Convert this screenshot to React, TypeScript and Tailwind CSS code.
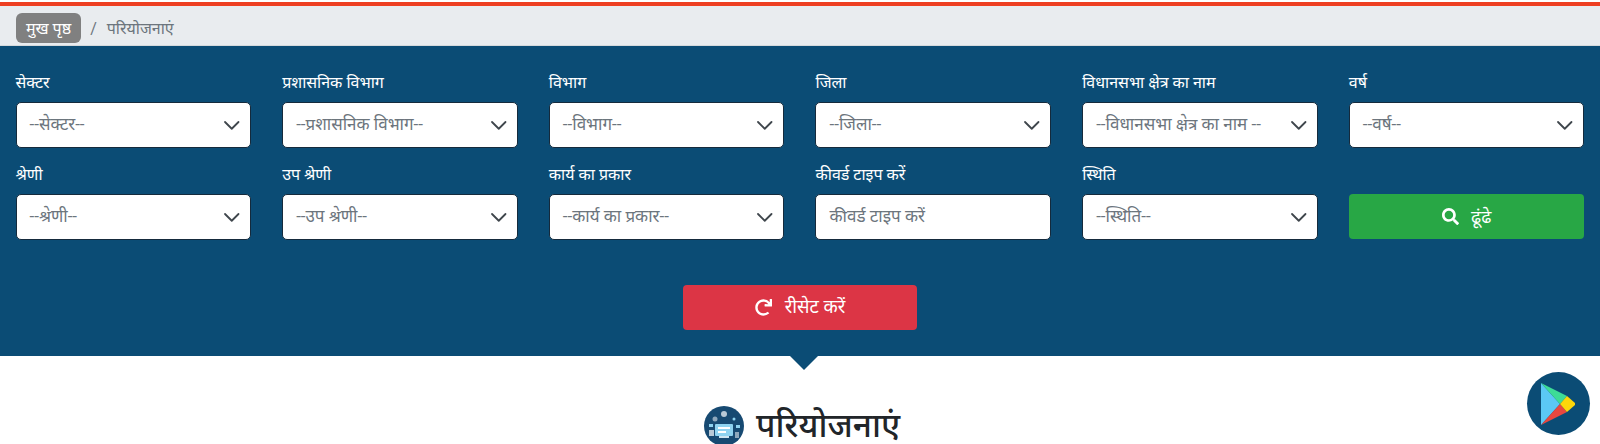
import React from 'react';
import { FaRedo, FaSearch } from 'react-icons/fa';

const Chevron = () => (
  <svg width="18" height="16" viewBox="0 0 18 16" className="shrink-0" fill="none">
    <path d="M3 5l6.75 6.75L16.5 5" stroke="#3f464c" strokeWidth="1.8" strokeLinecap="round" strokeLinejoin="round" />
  </svg>
);

const Field: React.FC<{ label: string; value: string; input?: boolean }> = ({ label, value, input }) => (
  <div className="px-[15.5px]">
    <div className="text-[16px] leading-[26px] text-white h-[24px] mb-[8px]">{label}</div>
    <div className="h-[46px] bg-white rounded-[5px] border border-[#152a3c] flex items-center justify-between pl-[13px] pr-[10px] text-[17px] text-[#6c757d]">
      <span className="whitespace-nowrap">{value}</span>
      {!input && <Chevron />}
    </div>
  </div>
);

const row1 = [
  ['सेक्टर', '--सेक्टर--'],
  ['प्रशासनिक विभाग', '--प्रशासनिक विभाग--'],
  ['विभाग', '--विभाग--'],
  ['जिला', '--जिला--'],
  ['विधानसभा क्षेत्र का नाम', '--विधानसभा क्षेत्र का नाम --'],
  ['वर्ष', '--वर्ष--'],
];

const row2 = [
  ['श्रेणी', '--श्रेणी--'],
  ['उप श्रेणी', '--उप श्रेणी--'],
  ['कार्य का प्रकार', '--कार्य का प्रकार--'],
];

const ProjectIcon = () => (
  <svg width="40" height="40" viewBox="0 0 40 40" className="shrink-0">
    <circle cx="20" cy="20" r="20" fill="#174a72" />
    <rect x="11" y="18" width="18" height="12" rx="1" fill="#8fd3f0" />
    <rect x="14" y="21" width="12" height="2" fill="#ffffff" />
    <rect x="14" y="25" width="8" height="2" fill="#ffffff" />
    <rect x="15" y="30" width="10" height="2" fill="#cfe6f2" />
    <circle cx="20" cy="8" r="3" fill="#b9c9d6" />
    <circle cx="11" cy="13" r="2.5" fill="#8fa8bc" />
    <circle cx="30" cy="13" r="1.5" fill="#8fd3f0" />
    <rect x="5" y="18" width="4" height="3" fill="#8fd3f0" />
    <rect x="5" y="24" width="5" height="6" fill="#b9c9d6" />
    <rect x="32" y="19" width="4" height="3" fill="#8fd3f0" />
    <rect x="31" y="26" width="4" height="6" fill="#8fa8bc" />
  </svg>
);

const PlayIcon = () => (
  <svg width="34" height="42" viewBox="0 0 34 42">
    <path d="M0 0v42l19-21z" fill="#5bc8f5" />
    <path d="M0 0l19 21 7-8z" fill="#3ddc97" />
    <path d="M0 42l19-21 7 8z" fill="#e8473f" />
    <path d="M26 13l-7 8 7 8 8-7v-2z" fill="#fdd60a" />
  </svg>
);

export default function App() {
  return (
    <div className="w-[1600px] h-[444px] overflow-hidden bg-white relative font-['Roboto','Noto_Sans','Liberation_Sans',sans-serif]">
      <div className="mt-[2px] h-[4px] bg-[#ee3f22]" />

      {/* Breadcrumb */}
      <div className="h-[40px] bg-[#e9ecef] flex items-center pl-4 text-[16px] text-[#6c757d] border-b border-[#d5d9dc]">
        <span className="bg-[#808080] text-white rounded-[6px] px-[10px] h-[30px] mt-[4px] flex items-center pt-[2px]">मुख पृष्ठ</span>
        <span className="mx-[9px] mt-[6px]">/</span>
        <span className="ml-[1px] mt-[6px]">परियोजनाएं</span>
      </div>

      {/* Filters */}
      <div className="relative bg-[#0b4c75] h-[310px] pt-[24px]">
        <div className="grid grid-cols-6 gap-y-[14px]">
          {row1.map(([label, value]) => (
            <Field key={label} label={label} value={value} />
          ))}
          {row2.map(([label, value]) => (
            <Field key={label} label={label} value={value} />
          ))}
          <Field label="कीवर्ड टाइप करें" value="कीवर्ड टाइप करें" input />
          <Field label="स्थिति" value="--स्थिति--" />
          <div className="px-[15.5px] pt-[32px]">
            <button className="w-full h-[45px] bg-[#28a745] rounded-[4px] text-white text-[18px] flex items-center justify-center gap-[12px]">
              <FaSearch className="text-[17px]" />
              ढूंढे
            </button>
          </div>
        </div>
        <div className="flex justify-center mt-[45px]">
          <button className="w-[234px] h-[45px] bg-[#dc3545] rounded-[4px] text-white text-[18.5px] flex items-center justify-center gap-[13px]">
            <FaRedo className="text-[17px]" />
            रीसेट करें
          </button>
        </div>
        <div className="absolute left-[790px] top-full w-0 h-0 border-x-[14px] border-x-transparent border-t-[14px] border-t-[#0b4c75]" />
      </div>

      {/* Heading */}
      <div className="flex justify-center items-center gap-[12px] mt-[50px] ml-[4px]">
        <ProjectIcon />
        <h2 className="text-[33.5px] leading-[40px] text-[#212529] font-medium">परियोजनाएं</h2>
      </div>

      {/* Play store badge */}
      <div className="absolute left-[1527px] top-[372px] w-[63px] h-[63px] rounded-full bg-[#0b4c75] flex items-center justify-center">
        <div className="mr-[2px]">
          <PlayIcon />
        </div>
      </div>
    </div>
  );
}
